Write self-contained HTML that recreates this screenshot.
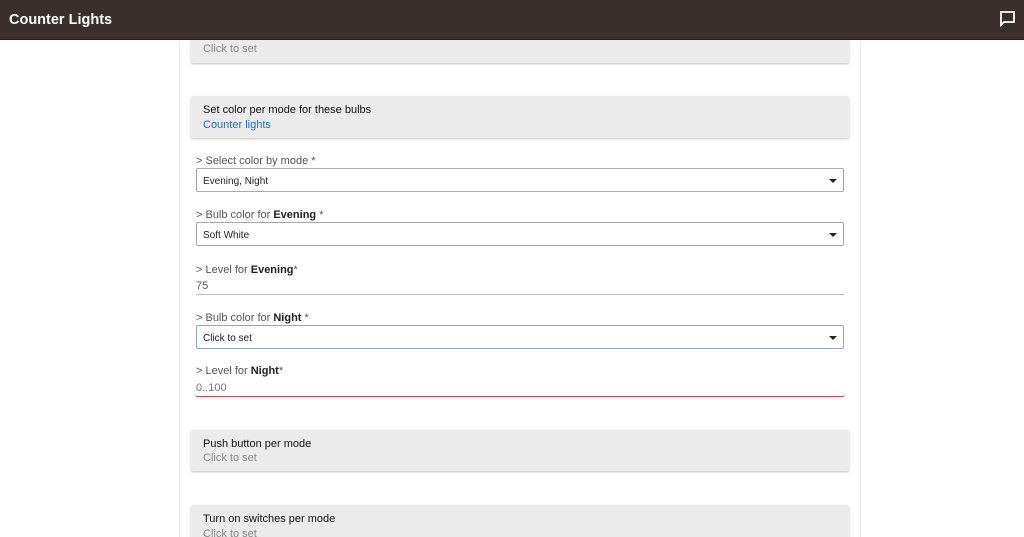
<!DOCTYPE html>
<html><head><meta charset="utf-8"><style>
*{box-sizing:border-box;margin:0;padding:0}
html,body{width:1024px;height:537px;overflow:hidden}
body{background:#fff;font-family:"Liberation Sans",Arial,sans-serif;position:relative}
.hdr{position:absolute;left:0;top:0;width:1024px;height:40px;background:#3a2f2c;border-bottom:1px solid #222;z-index:2}
.hdr .t{position:absolute;left:9px;top:12px;color:#fff;font-weight:bold;font-size:14.5px}
.vl{position:absolute;top:41px;bottom:0;width:1px;background:#eaeaea}
.card{position:absolute;left:191px;width:658px;background:#ebebeb;border-radius:2px;box-shadow:0 1px 2px rgba(0,0,0,.25);font-size:11px}
.card .a{position:absolute;left:12px;color:#111}
.card .b{position:absolute;left:12px;color:#888}
.lab{position:absolute;left:196px;font-size:11px;color:#555}
.lab b{color:#222}
.sel{position:absolute;left:196px;width:648px;height:24px;border:1px solid #aaa;border-radius:2px;font-size:10px;color:#222;padding:7px 0 0 6px}
.sel:after{content:"";position:absolute;right:6px;top:10px;border-left:4px solid transparent;border-right:4px solid transparent;border-top:4px solid #222}
.inp{position:absolute;left:196px;width:648px;height:16px;font-size:11px;color:#555;border-bottom:1px solid #bbb}
</style></head><body>
<div class="hdr"><div class="t">Counter Lights</div>
<svg style="position:absolute;left:999px;top:10px" width="17" height="17" viewBox="0 0 17 17"><path d="M2 2h13v10H5l-3 3z" fill="none" stroke="#fff" stroke-width="1.8"/></svg></div>
<div class="vl" style="left:179px"></div><div class="vl" style="left:860px"></div>
<div class="card" style="top:20px;height:43px"><div class="b" style="top:23px">Click to set</div></div>
<div class="card" style="top:96px;height:42px"><div class="a" style="top:8px">Set color per mode for these bulbs</div><div style="position:absolute;left:12px;top:23px;color:#1e6fc0">Counter lights</div></div>
<div class="lab" style="top:155px">&gt; Select color by mode *</div>
<div class="sel" style="top:168px">Evening, Night</div>
<div class="lab" style="top:209px">&gt; Bulb color for <b>Evening</b> *</div>
<div class="sel" style="top:222px">Soft White</div>
<div class="lab" style="top:264px">&gt; Level for <b>Evening</b>*</div>
<div class="inp" style="top:280px;height:15px">75</div>
<div class="lab" style="top:312px">&gt; Bulb color for <b>Night</b> *</div>
<div class="sel" style="top:325px;border-color:#8fa8d8">Click to set</div>
<div class="lab" style="top:365px">&gt; Level for <b>Night</b>*</div>
<div class="inp" style="top:382px;height:15px;border-bottom:1px solid #e04050;color:#777">0..100</div>
<div class="card" style="top:430px;height:41px"><div class="a" style="top:8px">Push button per mode</div><div class="b" style="top:22px">Click to set</div></div>
<div class="card" style="top:505px;height:45px"><div class="a" style="top:8px">Turn on switches per mode</div><div class="b" style="top:23px">Click to set</div></div>
</body></html>
